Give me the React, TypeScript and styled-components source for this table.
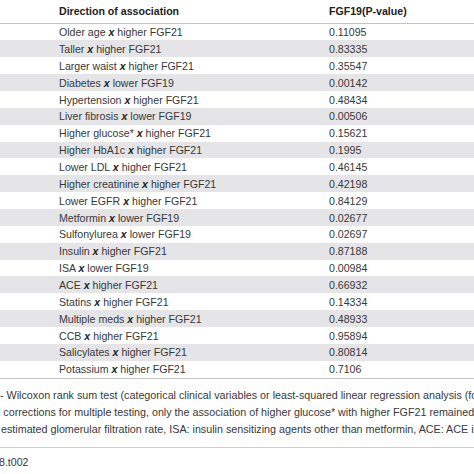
import React from 'react';
import styled, { createGlobalStyle } from 'styled-components';

const GlobalStyle = createGlobalStyle`
  html, body {
    margin: 0;
    padding: 0;
    background: #ffffff;
    overflow: hidden;
  }
  body {
    font-family: 'Liberation Sans', Arial, Helvetica, sans-serif;
    color: #333333;
  }
`;

const Page = styled.div`
  width: 474px;
  height: 474px;
  overflow: hidden;
  display: flex;
  flex-direction: column;
`;

const Table = styled.div`
  display: flex;
  flex-direction: column;
  border-bottom: 1.5px solid #c4c4c4;
`;

const Row = styled.div<{ $shaded?: boolean; $head?: boolean }>`
  display: grid;
  grid-template-columns: 329px 1fr;
  align-items: center;
  box-sizing: border-box;
  height: ${(p) => (p.$head ? '23.5px' : '16.86px')};
  padding-top: 1px;
  background: ${(p) => (p.$shaded ? '#e5e5e7' : '#ffffff')};
  border-bottom: ${(p) => (p.$head ? '1.5px solid #c4c4c4' : 'none')};
  font-size: 10.6px;
  font-weight: ${(p) => (p.$head ? 700 : 400)};
  color: ${(p) => (p.$head ? '#222222' : '#383838')};
`;

const Cell = styled.div<{ $first?: boolean }>`
  padding-left: ${(p) => (p.$first ? '59px' : '0')};
  white-space: nowrap;
  line-height: 1;
`;

const Times = styled.b`
  font-weight: 700;
  font-style: italic;
  color: #222222;
`;

const Notes = styled.div`
  padding-top: 8px;
  height: 60px;
  border-bottom: 1.5px solid #cfcfcf;
  display: flex;
  flex-direction: column;
`;

const NoteLine = styled.div<{ $shift?: number }>`
  font-size: 10.74px;
  line-height: 17px;
  white-space: nowrap;
  color: #383838;
  margin-left: ${(p) => p.$shift ?? 0}px;
`;

const Doi = styled.div`
  font-size: 10.6px;
  line-height: 17px;
  padding-top: 6px;
  margin-left: -1px;
  color: #383838;
  white-space: nowrap;
`;

const rows: [string, string, string][] = [
  ['Older age', 'higher FGF21', '0.11095'],
  ['Taller', 'higher FGF21', '0.83335'],
  ['Larger waist', 'higher FGF21', '0.35547'],
  ['Diabetes', 'lower FGF19', '0.00142'],
  ['Hypertension', 'higher FGF21', '0.48434'],
  ['Liver fibrosis', 'lower FGF19', '0.00506'],
  ['Higher glucose*', 'higher FGF21', '0.15621'],
  ['Higher HbA1c', 'higher FGF21', '0.1995'],
  ['Lower LDL', 'higher FGF21', '0.46145'],
  ['Higher creatinine', 'higher FGF21', '0.42198'],
  ['Lower EGFR', 'higher FGF21', '0.84129'],
  ['Metformin', 'lower FGF19', '0.02677'],
  ['Sulfonylurea', 'lower FGF19', '0.02697'],
  ['Insulin', 'higher FGF21', '0.87188'],
  ['ISA', 'lower FGF19', '0.00984'],
  ['ACE', 'higher FGF21', '0.66932'],
  ['Statins', 'higher FGF21', '0.14334'],
  ['Multiple meds', 'higher FGF21', '0.48933'],
  ['CCB', 'higher FGF21', '0.95894'],
  ['Salicylates', 'higher FGF21', '0.80814'],
  ['Potassium', 'higher FGF21', '0.7106'],
];

export default function App() {
  return (
    <Page>
      <GlobalStyle />
      <Table>
        <Row $head>
          <Cell $first>Direction of association</Cell>
          <Cell>FGF19(P-value)</Cell>
        </Row>
        {rows.map(([a, b, p], i) => (
          <Row key={a} $shaded={i % 2 === 1}>
            <Cell $first>
              {a} <Times>x</Times> {b}
            </Cell>
            <Cell>{p}</Cell>
          </Row>
        ))}
      </Table>
      <Notes>
        <NoteLine>
          - Wilcoxon rank sum test (categorical clinical variables or least-squared linear regression analysis (fo-
        </NoteLine>
        <NoteLine $shift={-2}>
          i corrections for multiple testing, only the association of higher glucose* with higher FGF21 remained
        </NoteLine>
        <NoteLine $shift={1}>
          estimated glomerular filtration rate, ISA: insulin sensitizing agents other than metformin, ACE: ACE in
        </NoteLine>
      </Notes>
      <Doi>8.t002</Doi>
    </Page>
  );
}
